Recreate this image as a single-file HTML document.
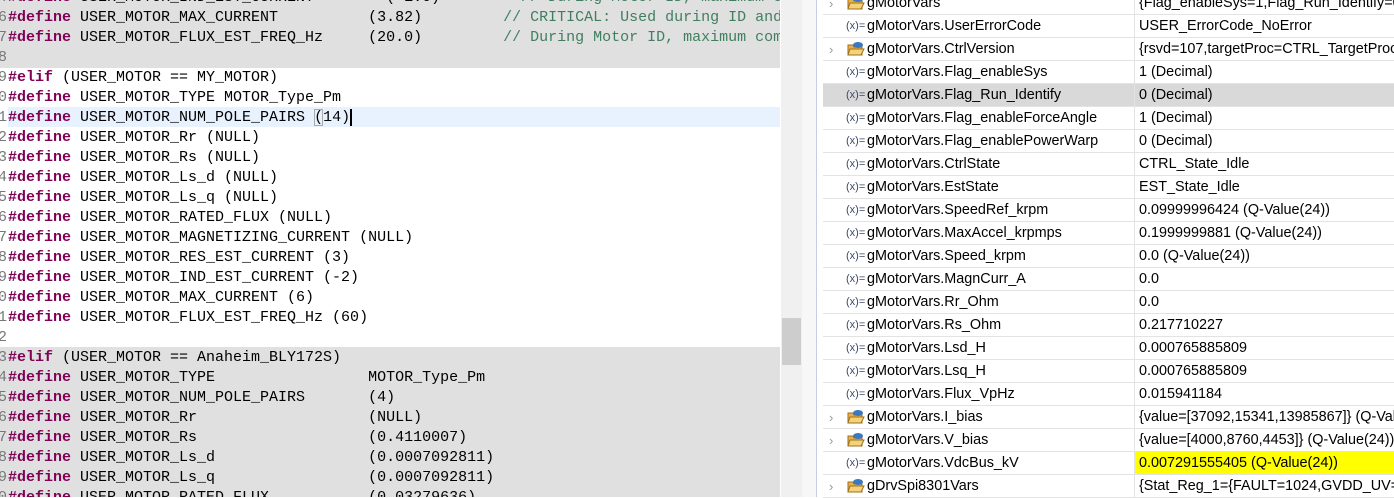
<!DOCTYPE html>
<html><head><meta charset="utf-8"><style>
*{margin:0;padding:0;box-sizing:border-box}
body{width:1394px;height:497px;overflow:hidden;background:#fff;position:relative;font-family:"Liberation Sans",sans-serif}
#code{position:absolute;left:0;top:0;width:780px;height:497px;overflow:hidden;background:#fff}
.ln{position:absolute;left:0;height:20px;width:780px;font:15px/20px "Liberation Mono",monospace;white-space:pre;color:#000;margin-top:2px}
.ln .n{position:absolute;left:-2px;width:9px;color:#787878}
.ln .t{position:absolute;left:8px}
.k{color:#7f0055;font-weight:bold}
.c{color:#3f7f5f}
#sb{position:absolute;left:781px;top:0;width:21px;height:497px;background:#f0f0f0}
#thumb{position:absolute;left:782px;top:318px;width:19px;height:47px;background:#cdcdcd}
#gap{position:absolute;left:802px;top:0;width:14px;height:497px;background:#f7f7f7}
#bd{position:absolute;left:816px;top:0;width:1px;height:497px;background:#c7cde2}
.r{position:absolute;left:823px;width:571px;height:23px;border-bottom:1px solid #e3e3e3;font-size:14.4px;line-height:23px;color:#000;white-space:nowrap;overflow:hidden}
.r .nm{position:absolute;left:44px}
.r .v{position:absolute;left:311px;top:0;height:22px;padding-left:4px;width:260px;border-left:1px solid #e3e3e3}
.r .ic{position:absolute;left:23px;top:6px;font-size:11px;line-height:11px;color:#3a4a6a}
.r .ar{position:absolute;left:6px;top:0;color:#999;font-size:13px}
.sel{background:#d9d9d9}
</style></head><body>
<div id="code">
<div style="top:-14px;left:0;width:780px;height:82px;background:#e0e0e0;position:absolute"></div>
<div style="top:347px;left:0;width:780px;height:160px;background:#e0e0e0;position:absolute"></div>
<div style="position:absolute;left:8px;top:107px;width:772px;height:20px;background:#e8f2fe"></div>
<div class="ln" style="top:-14px"><span class="n">4</span><span class="t"><span class="k">#define</span> USER_MOTOR_IND_EST_CURRENT        (-1.0)         <span class="c">// During Motor ID, maximum cur</span></span></div>
<div class="ln" style="top:6px"><span class="n">6</span><span class="t"><span class="k">#define</span> USER_MOTOR_MAX_CURRENT          (3.82)         <span class="c">// CRITICAL: Used during ID and</span></span></div>
<div class="ln" style="top:26px"><span class="n">7</span><span class="t"><span class="k">#define</span> USER_MOTOR_FLUX_EST_FREQ_Hz     (20.0)         <span class="c">// During Motor ID, maximum com</span></span></div>
<div class="ln" style="top:46px"><span class="n">8</span></div>
<div class="ln" style="top:66px"><span class="n">9</span><span class="t"><span class="k">#elif</span> (USER_MOTOR == MY_MOTOR)</span></div>
<div class="ln" style="top:86px"><span class="n">0</span><span class="t"><span class="k">#define</span> USER_MOTOR_TYPE MOTOR_Type_Pm</span></div>
<div class="ln" style="top:106px"><span class="n">1</span><span class="t"><span class="k">#define</span> USER_MOTOR_NUM_POLE_PAIRS <span style="outline:1px solid #aaa;outline-offset:-1px">(</span>14)<span style="border-left:2px solid #000"></span></span></div>
<div class="ln" style="top:126px"><span class="n">2</span><span class="t"><span class="k">#define</span> USER_MOTOR_Rr (NULL)</span></div>
<div class="ln" style="top:146px"><span class="n">3</span><span class="t"><span class="k">#define</span> USER_MOTOR_Rs (NULL)</span></div>
<div class="ln" style="top:166px"><span class="n">4</span><span class="t"><span class="k">#define</span> USER_MOTOR_Ls_d (NULL)</span></div>
<div class="ln" style="top:186px"><span class="n">5</span><span class="t"><span class="k">#define</span> USER_MOTOR_Ls_q (NULL)</span></div>
<div class="ln" style="top:206px"><span class="n">6</span><span class="t"><span class="k">#define</span> USER_MOTOR_RATED_FLUX (NULL)</span></div>
<div class="ln" style="top:226px"><span class="n">7</span><span class="t"><span class="k">#define</span> USER_MOTOR_MAGNETIZING_CURRENT (NULL)</span></div>
<div class="ln" style="top:246px"><span class="n">8</span><span class="t"><span class="k">#define</span> USER_MOTOR_RES_EST_CURRENT (3)</span></div>
<div class="ln" style="top:266px"><span class="n">9</span><span class="t"><span class="k">#define</span> USER_MOTOR_IND_EST_CURRENT (-2)</span></div>
<div class="ln" style="top:286px"><span class="n">0</span><span class="t"><span class="k">#define</span> USER_MOTOR_MAX_CURRENT (6)</span></div>
<div class="ln" style="top:306px"><span class="n">1</span><span class="t"><span class="k">#define</span> USER_MOTOR_FLUX_EST_FREQ_Hz (60)</span></div>
<div class="ln" style="top:326px"><span class="n">2</span></div>
<div class="ln" style="top:346px"><span class="n">3</span><span class="t"><span class="k">#elif</span> (USER_MOTOR == Anaheim_BLY172S)</span></div>
<div class="ln" style="top:366px"><span class="n">4</span><span class="t"><span class="k">#define</span> USER_MOTOR_TYPE                 MOTOR_Type_Pm</span></div>
<div class="ln" style="top:386px"><span class="n">5</span><span class="t"><span class="k">#define</span> USER_MOTOR_NUM_POLE_PAIRS       (4)</span></div>
<div class="ln" style="top:406px"><span class="n">6</span><span class="t"><span class="k">#define</span> USER_MOTOR_Rr                   (NULL)</span></div>
<div class="ln" style="top:426px"><span class="n">7</span><span class="t"><span class="k">#define</span> USER_MOTOR_Rs                   (0.4110007)</span></div>
<div class="ln" style="top:446px"><span class="n">8</span><span class="t"><span class="k">#define</span> USER_MOTOR_Ls_d                 (0.0007092811)</span></div>
<div class="ln" style="top:466px"><span class="n">9</span><span class="t"><span class="k">#define</span> USER_MOTOR_Ls_q                 (0.0007092811)</span></div>
<div class="ln" style="top:486px"><span class="n">0</span><span class="t"><span class="k">#define</span> USER_MOTOR_RATED_FLUX           (0.03279636)</span></div>
</div>
<div id="sb"></div><div id="thumb"></div><div id="gap"></div><div id="bd"></div>
<div id="tbl"></div>
<script>
var rows=[
["gMotorVars","{Flag_enableSys=1,Flag_Run_Identify=0",1],
["gMotorVars.UserErrorCode","USER_ErrorCode_NoError",0],
["gMotorVars.CtrlVersion","{rsvd=107,targetProc=CTRL_TargetProc",1],
["gMotorVars.Flag_enableSys","1 (Decimal)",0],
["gMotorVars.Flag_Run_Identify","0 (Decimal)",0,"sel"],
["gMotorVars.Flag_enableForceAngle","1 (Decimal)",0],
["gMotorVars.Flag_enablePowerWarp","0 (Decimal)",0],
["gMotorVars.CtrlState","CTRL_State_Idle",0],
["gMotorVars.EstState","EST_State_Idle",0],
["gMotorVars.SpeedRef_krpm","0.09999996424 (Q-Value(24))",0],
["gMotorVars.MaxAccel_krpmps","0.1999999881 (Q-Value(24))",0],
["gMotorVars.Speed_krpm","0.0 (Q-Value(24))",0],
["gMotorVars.MagnCurr_A","0.0",0],
["gMotorVars.Rr_Ohm","0.0",0],
["gMotorVars.Rs_Ohm","0.217710227",0],
["gMotorVars.Lsd_H","0.000765885809",0],
["gMotorVars.Lsq_H","0.000765885809",0],
["gMotorVars.Flux_VpHz","0.015941184",0],
["gMotorVars.I_bias","{value=[37092,15341,13985867]} (Q-Value(24))",1],
["gMotorVars.V_bias","{value=[4000,8760,4453]} (Q-Value(24))",1],
["gMotorVars.VdcBus_kV","0.007291555405 (Q-Value(24))",0,"y"],
["gDrvSpi8301Vars","{Stat_Reg_1={FAULT=1024,GVDD_UV=5",1]];
var h="";
rows.forEach(function(r,i){
var top=-8+23*i;
var icon=r[2]?'<span class="ar">&#8250;</span><svg style="position:absolute;left:24px;top:3px" width="18" height="16"><path d="M1 4h5l1 2h8v8H1z" fill="#e8b04a" stroke="#a0701c"/><path d="M3 8h14l-3 6H1z" fill="#f5d27a" stroke="#a0701c"/><ellipse cx="11" cy="4" rx="5" ry="3" fill="#3a78c0"/></svg>':'<span class="ic">(x)=</span>';
h+='<div class="r '+(r[3]=="sel"?"sel":"")+'" style="top:'+top+'px">'+icon+'<span class="nm">'+r[0]+'</span><span class="v" style="'+(r[3]=="y"?"background:#ffff00":"")+'">'+r[1]+'</span></div>';
});
document.getElementById("tbl").innerHTML=h;
</script>
</body></html>
